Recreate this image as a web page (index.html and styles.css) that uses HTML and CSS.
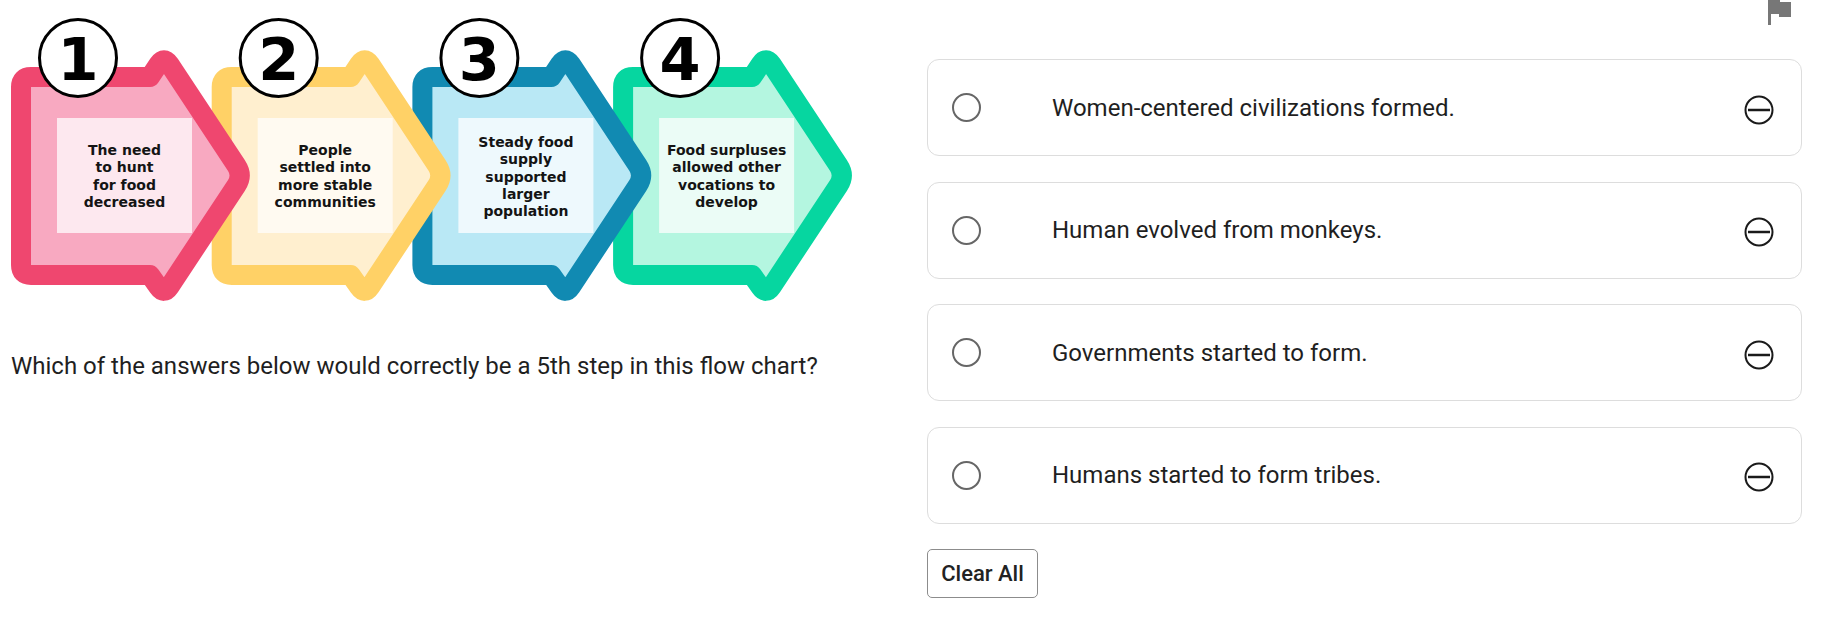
FILE: index.html
```html
<!DOCTYPE html>
<html lang="en">
<head>
<meta charset="utf-8">
<title>Question</title>
<link rel="stylesheet" href="styles.css">
</head>
<body>
<div class="page">
  <section class="stem">
    <svg class="flow" width="880" height="310" viewBox="0 0 880 310" xmlns="http://www.w3.org/2000/svg">
      <defs>
        <path id="arrowShape" d="M31,77 L150,77 L158.5,64.3 Q164,56 169.5,64.3 L236.4,165.5 Q243,175.5 236.4,185.5 L169.5,286.7 Q164,295 158.3,286.8 L150,275 L31,275 Q21,275 21,265 L21,87 Q21,77 31,77 Z"/>
      </defs>
      <g transform="translate(602.1,0)">
        <use href="#arrowShape" class="arrow a4"/>
        <rect x="57" y="118" width="135" height="115" class="box b4"/>
        <text class="step-text" x="124.5" y="155"><tspan x="124.5">Food surpluses</tspan><tspan x="124.5" dy="17.3">allowed other</tspan><tspan x="124.5" dy="17.3">vocations to</tspan><tspan x="124.5" dy="17.3">develop</tspan></text>
      </g>
      <g transform="translate(401.4,0)">
        <use href="#arrowShape" class="arrow a3"/>
        <rect x="57" y="118" width="135" height="115" class="box b3"/>
        <text class="step-text" x="124.5" y="147"><tspan x="124.5">Steady food</tspan><tspan x="124.5" dy="17.3">supply</tspan><tspan x="124.5" dy="17.3">supported</tspan><tspan x="124.5" dy="17.3">larger</tspan><tspan x="124.5" dy="17.3">population</tspan></text>
      </g>
      <g transform="translate(200.7,0)">
        <use href="#arrowShape" class="arrow a2"/>
        <rect x="57" y="118" width="135" height="115" class="box b2"/>
        <text class="step-text" x="124.5" y="155"><tspan x="124.5">People</tspan><tspan x="124.5" dy="17.3">settled into</tspan><tspan x="124.5" dy="17.3">more stable</tspan><tspan x="124.5" dy="17.3">communities</tspan></text>
      </g>
      <g>
        <use href="#arrowShape" class="arrow a1"/>
        <rect x="57" y="118" width="135" height="115" class="box b1"/>
        <text class="step-text" x="124.5" y="155"><tspan x="124.5">The need</tspan><tspan x="124.5" dy="17.3">to hunt</tspan><tspan x="124.5" dy="17.3">for food</tspan><tspan x="124.5" dy="17.3">decreased</tspan></text>
      </g>
      <g class="badge"><circle cx="78" cy="58" r="38.5"/><text x="78" y="80">1</text></g>
      <g class="badge"><circle cx="278.7" cy="58" r="38.5"/><text x="278.7" y="80">2</text></g>
      <g class="badge"><circle cx="479.4" cy="58" r="38.5"/><text x="479.4" y="80">3</text></g>
      <g class="badge"><circle cx="680.1" cy="58" r="38.5"/><text x="680.1" y="80">4</text></g>
    </svg>
    <p class="question">Which of the answers below would correctly be a 5th step in this flow chart?</p>
  </section>

  <section class="answers">
    <div class="toolbar">
      <svg class="flag" width="23" height="25" viewBox="0 0 23 25" xmlns="http://www.w3.org/2000/svg">
        <path d="M0,0 H12 V2 H23 V17 H11 V14 H3 V25 H0 Z"/>
      </svg>
    </div>
    <ul class="choices">
      <li class="choice">
        <span class="radio"></span>
        <span class="label">Women-centered civilizations formed.</span>
        <svg class="eliminate" width="30" height="30" viewBox="0 0 30 30"><circle cx="15" cy="15" r="13.5"/><line x1="4" y1="15" x2="26" y2="15"/></svg>
      </li>
      <li class="choice">
        <span class="radio"></span>
        <span class="label">Human evolved from monkeys.</span>
        <svg class="eliminate" width="30" height="30" viewBox="0 0 30 30"><circle cx="15" cy="15" r="13.5"/><line x1="4" y1="15" x2="26" y2="15"/></svg>
      </li>
      <li class="choice">
        <span class="radio"></span>
        <span class="label">Governments started to form.</span>
        <svg class="eliminate" width="30" height="30" viewBox="0 0 30 30"><circle cx="15" cy="15" r="13.5"/><line x1="4" y1="15" x2="26" y2="15"/></svg>
      </li>
      <li class="choice">
        <span class="radio"></span>
        <span class="label">Humans started to form tribes.</span>
        <svg class="eliminate" width="30" height="30" viewBox="0 0 30 30"><circle cx="15" cy="15" r="13.5"/><line x1="4" y1="15" x2="26" y2="15"/></svg>
      </li>
    </ul>
    <button class="clear" type="button">Clear All</button>
  </section>
</div>
</body>
</html>
```

FILE: styles.css
```css
html, body {
  margin: 0;
  padding: 0;
  background: #ffffff;
}

body {
  font-family: Roboto, "Liberation Sans", Arial, sans-serif;
  color: #1f1f1f;
}

.page {
  display: flex;
  align-items: flex-start;
  width: 1830px;
}

.stem {
  flex: none;
  width: 927px;
}

.flow {
  display: block;
}

.arrow {
  stroke-width: 20;
  stroke-linejoin: round;
}

.a1 { fill: #f8a9c1; stroke: #ef476f; }
.a2 { fill: #ffefcf; stroke: #ffd166; }
.a3 { fill: #b9e8f5; stroke: #118ab2; }
.a4 { fill: #b4f6e0; stroke: #06d6a0; }

.b1 { fill: #fde8ef; }
.b2 { fill: #fffaf1; }
.b3 { fill: #eef9fd; }
.b4 { fill: #ebfcf6; }

.step-text {
  font-family: "DejaVu Sans", Verdana, sans-serif;
  font-weight: bold;
  font-size: 14px;
  fill: #141414;
  text-anchor: middle;
}

.badge circle {
  fill: #ffffff;
  stroke: #000000;
  stroke-width: 3;
}

.badge text {
  font-family: "DejaVu Sans", Verdana, sans-serif;
  font-weight: bold;
  font-size: 59px;
  fill: #000000;
  text-anchor: middle;
}

.question {
  margin: 42px 0 0 0;
  padding-left: 11px;
  font-size: 24px;
  line-height: 28px;
  color: #1f1f1f;
}

.answers {
  flex: none;
  width: 875px;
}

.toolbar {
  display: flex;
  justify-content: flex-end;
  height: 24px;
  padding-right: 12px;
}

.flag {
  display: block;
  fill: #777777;
  margin-right: -1px;
}

.choices {
  list-style: none;
  margin: 35px 0 0 0;
  padding: 0;
  display: flex;
  flex-direction: column;
  gap: 25.5px;
}

.choice {
  box-sizing: border-box;
  height: 97px;
  border: 1px solid #dddddd;
  border-radius: 12px;
  display: flex;
  align-items: center;
  padding: 0 27px 0 24px;
}

.radio {
  flex: none;
  box-sizing: border-box;
  width: 29px;
  height: 29px;
  border: 2.5px solid #666666;
  border-radius: 50%;
}

.label {
  flex: 1;
  margin-left: 71px;
  font-size: 24px;
  line-height: 28px;
  color: #1f1f1f;
}

.eliminate {
  flex: none;
  display: block;
  margin-top: 4px;
  fill: none;
  stroke: #1a1a1a;
  stroke-width: 2;
}

.eliminate line {
  stroke-width: 2.5;
}

.clear {
  display: block;
  margin-top: 25px;
  box-sizing: border-box;
  width: 111px;
  height: 49px;
  padding: 0;
  background: #ffffff;
  border: 1px solid #8c8c8c;
  border-radius: 5px;
  font-family: Roboto, "Liberation Sans", Arial, sans-serif;
  font-weight: 500;
  font-size: 22px;
  color: #222222;
}
```
